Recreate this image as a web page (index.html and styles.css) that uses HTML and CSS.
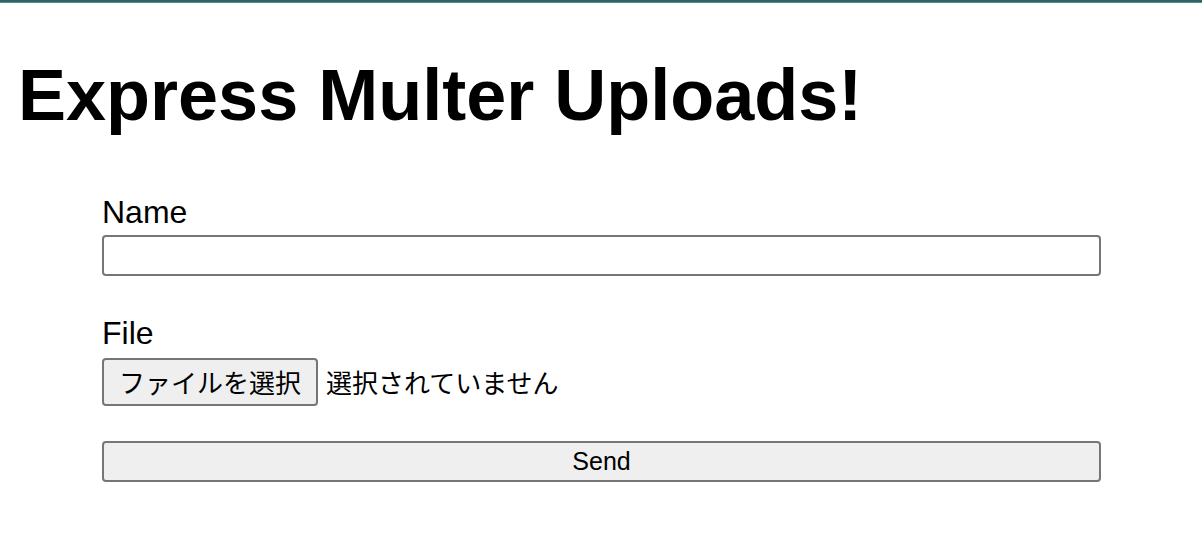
FILE: index.html
```html
<!DOCTYPE html>
<html lang="ja">
<head>
    <meta charset="UTF-8">
    <meta name="viewport" content="width=device-width, initial-scale=1.0">
    <title>Express Multer Uploads</title>
    <link rel="stylesheet" href="styles.css">
</head>
<body>
    <div class="topbar"></div>
    <h1>Express Multer Uploads!</h1>
    <form class="upload-form" action="/upload" method="post" enctype="multipart/form-data">
        <div class="field">
            <label for="name">Name</label>
            <input type="text" name="name" id="name">
        </div>
        <div class="field">
            <label>File</label>
            <div class="file-row">
                <button type="button" class="file-btn">ファイルを選択</button>
                <span class="file-name">選択されていません</span>
            </div>
        </div>
        <button type="submit" class="send-btn">Send</button>
    </form>
</body>
</html>
```

FILE: styles.css
```css
body {
    font-family: "Liberation Sans", "Noto Sans CJK JP", sans-serif;
    background-color: #fff;
    color: #000;
    margin: 0;
}

.topbar {
    height: 3px;
    background: #2e6266;
    border-bottom: 1px solid #5d8a8e;
    box-sizing: border-box;
}

h1 {
    font-size: 72px;
    font-weight: bold;
    line-height: 1.15;
    margin: 51px 0 0 18px;
}

.upload-form {
    width: 999px;
    margin: 58px 0 0 102px;
}

.field {
    margin-bottom: 40px;
}

.field label {
    display: block;
    font-size: 32px;
    line-height: 34.5px;
    margin-bottom: 6px;
}

.field input[type="text"] {
    display: block;
    width: 100%;
    height: 41px;
    box-sizing: border-box;
    border: 2px solid #767676;
    border-radius: 4px;
    font-size: 24px;
    padding: 0 6px;
}

.field:nth-child(2) {
    margin-bottom: 35px;
}

.field:nth-child(2) label {
    margin-bottom: 7px;
}

.file-row {
    display: flex;
    align-items: center;
    gap: 8px;
}

.file-btn {
    height: 48px;
    padding: 0 15px;
    font-family: "Liberation Sans", "Noto Sans CJK JP", sans-serif;
    font-size: 26px;
    background: #efefef;
    border: 2px solid #767676;
    border-radius: 4px;
    color: #000;
}

.file-name {
    font-size: 26px;
}

.send-btn {
    display: block;
    width: 100%;
    height: 41px;
    font-family: "Liberation Sans", sans-serif;
    font-size: 25px;
    background: #efefef;
    border: 2px solid #767676;
    border-radius: 4px;
    color: #000;
}
```
